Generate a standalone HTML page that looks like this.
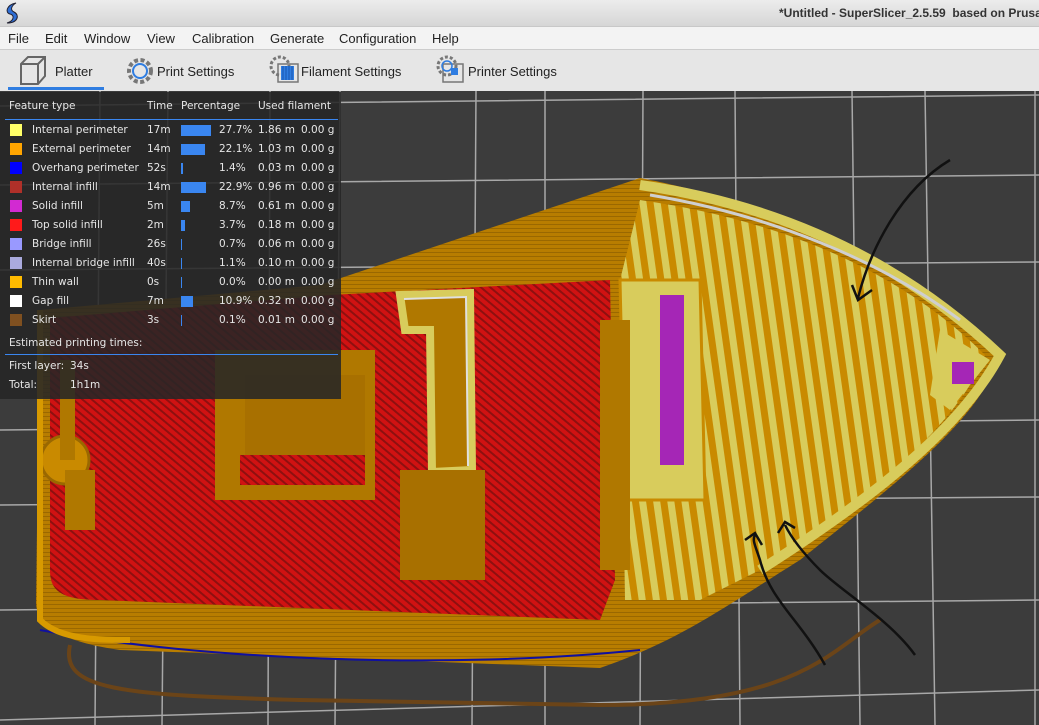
<!DOCTYPE html>
<html><head><meta charset="utf-8"><style>
*{margin:0;padding:0;box-sizing:border-box}
body{width:1039px;height:725px;overflow:hidden;font-family:"Liberation Sans","DejaVu Sans",sans-serif;background:#3b3b3b;position:relative}
#title{position:absolute;left:0;top:0;width:1039px;height:27px;background:linear-gradient(#ececec,#d6d6d6);border-bottom:1px solid #c8c8c8}
#title .t{position:absolute;left:779px;top:6px;font-size:12px;font-weight:bold;color:#333;white-space:nowrap}
#menu{position:absolute;left:0;top:27px;width:1039px;height:23px;background:#f3f3f3;font-size:13px;color:#222;border-bottom:1px solid #ccc}
#menu span{position:absolute;top:4px}
#tb{position:absolute;left:0;top:50px;width:1039px;height:41px;background:#e6e6e6;font-size:13px;color:#222}
#tb span{position:absolute;top:14px}
#tb .ul{position:absolute;left:8px;top:37px;width:96px;height:3px;background:#2f7de1}
svg.c{position:absolute;left:0;top:91px}
#leg{position:absolute;left:0;top:92px;width:341px;height:307px;background:rgba(38,38,38,0.88);color:#e6e6e6;font-family:"DejaVu Sans",sans-serif;font-size:10.5px}
#leg div{position:absolute;white-space:nowrap}
#leg .sw{width:12px;height:12px}
#leg .bar{height:11px;background:#3a86f0}
#leg .ln{height:1px;background:#3a86f0;left:5px;width:333px}
</style></head><body>
<div id="title">
<svg width="22" height="24" style="position:absolute;left:2px;top:1px" viewBox="0 0 22 24"><path d="M14 2 C4 4 3 12 8 13 C13 14 12 20 5 22 C16 22 18 14 12 11 C8 9 9 5 14 2Z" fill="#2f6fd6" stroke="#223" stroke-width="1"/></svg>
<div class="t">*Untitled - SuperSlicer_2.5.59&nbsp; based on Prusa</div></div>
<div id="menu"><span style="left:8px">File</span><span style="left:45px">Edit</span><span style="left:84px">Window</span><span style="left:147px">View</span><span style="left:192px">Calibration</span><span style="left:270px">Generate</span><span style="left:339px">Configuration</span><span style="left:432px">Help</span></div>
<div id="tb">
<svg width="36" height="34" style="position:absolute;left:18px;top:4px" viewBox="0 0 36 34"><path d="M3 10 L10 3 L27 3 L27 22 L20 30 L3 30 Z M3 10 L20 10 L20 30 M20 10 L27 3" fill="none" stroke="#666" stroke-width="2"/></svg>
<span style="left:55px">Platter</span>
<svg width="30" height="30" style="position:absolute;left:125px;top:6px" viewBox="0 0 30 30"><circle cx="15" cy="15" r="11" fill="none" stroke="#777" stroke-width="4" stroke-dasharray="4 2.5"/><circle cx="15" cy="15" r="7" fill="none" stroke="#2f7de1" stroke-width="2"/></svg>
<span style="left:157px">Print Settings</span>
<svg width="32" height="32" style="position:absolute;left:268px;top:4px" viewBox="0 0 32 32"><circle cx="12" cy="12" r="9" fill="none" stroke="#777" stroke-width="3" stroke-dasharray="3 2"/><rect x="10" y="10" width="20" height="18" fill="none" stroke="#777" stroke-width="1.5"/><rect x="13" y="12" width="13" height="14" fill="#2f7de1"/><path d="M15 12v14M18 12v14M21 12v14M24 12v14" stroke="#1a55b0"/></svg>
<span style="left:301px">Filament Settings</span>
<svg width="32" height="32" style="position:absolute;left:435px;top:4px" viewBox="0 0 32 32"><circle cx="12" cy="12" r="9" fill="none" stroke="#777" stroke-width="3" stroke-dasharray="3 2"/><rect x="8" y="10" width="20" height="18" fill="none" stroke="#777" stroke-width="1.5"/><rect x="16" y="14" width="7" height="7" fill="#2f7de1"/><circle cx="12" cy="12" r="5" fill="none" stroke="#2f7de1" stroke-width="1.5"/></svg>
<span style="left:468px">Printer Settings</span>
<div class="ul"></div></div>

<svg class="c" width="1039" height="634" viewBox="0 91 1039 634">
<defs>
<pattern id="red" width="6" height="6" patternUnits="userSpaceOnUse" patternTransform="rotate(40)"><rect width="6" height="6" fill="#d01212"/><rect width="6" height="2" fill="#8e1010"/></pattern>
<pattern id="str" width="14" height="14" patternUnits="userSpaceOnUse" patternTransform="rotate(-8)"><rect width="14" height="14" fill="#c98a00"/><rect x="3" width="7" height="14" fill="#d8cc5c"/></pattern>
<pattern id="or" width="4" height="4" patternUnits="userSpaceOnUse"><rect width="4" height="4" fill="#b87d00"/><rect width="4" height="1" fill="#9a6800"/></pattern>
</defs>
<rect x="0" y="91" width="1039" height="634" fill="#3c3c3c"/>
<g stroke="#a8a8a8" stroke-width="1.5" fill="none">
<path d="M0 106 L1039 95 M0 185 L1039 175 M0 270 L1039 262 M0 430 L1039 420 M0 505 L1039 497 M0 610 L1039 600 M0 720 L1039 690"/>
<path d="M100 91 L95 725 M168 91 L162 725 M340 91 L335 725 M476 91 L472 725 M643 91 L640 725 M735 91 L740 725 M852 91 L860 725 M925 91 L935 725 M1035 91 L1035 725 M270 91 L268 725 M545 91 L545 725"/>
</g>
<path d="M70 645 C60 690 120 695 300 700 L600 705 C800 705 830 650 880 620" fill="none" stroke="#6b4418" stroke-width="4"/>
<path d="M40 310 L320 285 L640 178 C760 200 900 260 1000 355 C980 420 900 480 800 560 C720 610 680 640 600 668 L120 650 C50 640 35 620 36 600 Z" fill="url(#or)"/>
<path d="M40 630 C200 660 450 670 640 650" fill="none" stroke="#1010a0" stroke-width="2"/>
<path d="M50 318 L330 295 L610 280 L615 580 L600 620 L100 600 C60 600 50 590 50 570 Z" fill="url(#red)"/>
<path d="M620 280 L640 200 C780 220 900 270 985 355 C960 420 880 490 760 570 L700 600 L625 600 Z" fill="url(#str)"/>
<path d="M640 185 C780 205 900 260 1000 355 C960 430 870 500 760 570" fill="none" stroke="#d8cc5c" stroke-width="10"/>
<path d="M650 195 C770 215 880 260 960 320" fill="none" stroke="#cfcfcf" stroke-width="3"/>
<path d="M620 280 L700 280 L705 500 L625 500 Z" fill="#d8cc5c" stroke="#c98a00" stroke-width="3"/>
<rect x="660" y="295" width="24" height="170" fill="#a526b6"/>
<path d="M940 330 L990 360 L950 410 L930 395Z" fill="#d8cc5c"/>
<rect x="952" y="362" width="22" height="22" fill="#a526b6"/>
<path d="M400 295 L470 293 L472 470 L432 472 L430 330 L405 330 Z" fill="#b07800" stroke="#d8cc5c" stroke-width="8"/>
<path d="M404 299 L466 297 L468 466" fill="none" stroke="#e0e0e0" stroke-width="2"/>
<rect x="215" y="350" width="160" height="150" fill="#b07800"/>
<rect x="245" y="375" width="120" height="90" fill="#a87000"/>
<rect x="240" y="455" width="125" height="30" fill="url(#red)"/>
<rect x="400" y="470" width="85" height="110" fill="#a87000"/>
<rect x="600" y="320" width="30" height="250" fill="#b07800"/>
<circle cx="65" cy="460" r="24" fill="#c98a00" stroke="#9a6800" stroke-width="3"/>
<rect x="65" y="470" width="30" height="60" fill="#b07800"/>
<rect x="60" y="360" width="15" height="100" fill="#b07800"/>
<path d="M40 310 L40 620 C60 640 100 640 130 640" fill="none" stroke="#d89a00" stroke-width="6"/>
<path d="M950 160 C900 190 870 250 858 298 M852 285 L858 300 L872 290" fill="none" stroke="#111" stroke-width="2.5"/>
<path d="M825 665 C800 620 770 600 760 560 C755 545 752 540 755 535 M745 540 L755 533 L762 545" fill="none" stroke="#111" stroke-width="2.5"/>
<path d="M915 655 C890 620 840 590 820 570 C800 550 790 535 785 525 M778 533 L785 522 L795 528" fill="none" stroke="#111" stroke-width="2.5"/>
</svg>

<div id="leg">
<div style="left:9px;top:8px">Feature type</div><div style="left:147px;top:8px">Time</div><div style="left:181px;top:8px">Percentage</div><div style="left:258px;top:8px">Used filament</div>
<div class="ln" style="top:27px"></div>
<div class="sw" style="left:10px;top:32px;background:#ffff68"></div><div style="left:32px;top:32px">Internal perimeter</div><div style="left:147px;top:32px">17m</div><div class="bar" style="left:181px;top:33px;width:30px"></div><div style="left:219px;top:32px">27.7%</div><div style="left:258px;top:32px">1.86 m</div><div style="left:301px;top:32px">0.00 g</div>
<div class="sw" style="left:10px;top:51px;background:#ffa500"></div><div style="left:32px;top:51px">External perimeter</div><div style="left:147px;top:51px">14m</div><div class="bar" style="left:181px;top:52px;width:24px"></div><div style="left:219px;top:51px">22.1%</div><div style="left:258px;top:51px">1.03 m</div><div style="left:301px;top:51px">0.00 g</div>
<div class="sw" style="left:10px;top:70px;background:#0000ff"></div><div style="left:32px;top:70px">Overhang perimeter</div><div style="left:147px;top:70px">52s</div><div class="bar" style="left:181px;top:71px;width:2px"></div><div style="left:219px;top:70px">1.4%</div><div style="left:258px;top:70px">0.03 m</div><div style="left:301px;top:70px">0.00 g</div>
<div class="sw" style="left:10px;top:89px;background:#b03029"></div><div style="left:32px;top:89px">Internal infill</div><div style="left:147px;top:89px">14m</div><div class="bar" style="left:181px;top:90px;width:25px"></div><div style="left:219px;top:89px">22.9%</div><div style="left:258px;top:89px">0.96 m</div><div style="left:301px;top:89px">0.00 g</div>
<div class="sw" style="left:10px;top:108px;background:#d22ad2"></div><div style="left:32px;top:108px">Solid infill</div><div style="left:147px;top:108px">5m</div><div class="bar" style="left:181px;top:109px;width:9px"></div><div style="left:219px;top:108px">8.7%</div><div style="left:258px;top:108px">0.61 m</div><div style="left:301px;top:108px">0.00 g</div>
<div class="sw" style="left:10px;top:127px;background:#ff1a1a"></div><div style="left:32px;top:127px">Top solid infill</div><div style="left:147px;top:127px">2m</div><div class="bar" style="left:181px;top:128px;width:4px"></div><div style="left:219px;top:127px">3.7%</div><div style="left:258px;top:127px">0.18 m</div><div style="left:301px;top:127px">0.00 g</div>
<div class="sw" style="left:10px;top:146px;background:#9999ff"></div><div style="left:32px;top:146px">Bridge infill</div><div style="left:147px;top:146px">26s</div><div class="bar" style="left:181px;top:147px;width:1px"></div><div style="left:219px;top:146px">0.7%</div><div style="left:258px;top:146px">0.06 m</div><div style="left:301px;top:146px">0.00 g</div>
<div class="sw" style="left:10px;top:165px;background:#aaaadd"></div><div style="left:32px;top:165px">Internal bridge infill</div><div style="left:147px;top:165px">40s</div><div class="bar" style="left:181px;top:166px;width:1px"></div><div style="left:219px;top:165px">1.1%</div><div style="left:258px;top:165px">0.10 m</div><div style="left:301px;top:165px">0.00 g</div>
<div class="sw" style="left:10px;top:184px;background:#ffbb00"></div><div style="left:32px;top:184px">Thin wall</div><div style="left:147px;top:184px">0s</div><div class="bar" style="left:181px;top:185px;width:1px"></div><div style="left:219px;top:184px">0.0%</div><div style="left:258px;top:184px">0.00 m</div><div style="left:301px;top:184px">0.00 g</div>
<div class="sw" style="left:10px;top:203px;background:#ffffff"></div><div style="left:32px;top:203px">Gap fill</div><div style="left:147px;top:203px">7m</div><div class="bar" style="left:181px;top:204px;width:12px"></div><div style="left:219px;top:203px">10.9%</div><div style="left:258px;top:203px">0.32 m</div><div style="left:301px;top:203px">0.00 g</div>
<div class="sw" style="left:10px;top:222px;background:#7f5020"></div><div style="left:32px;top:222px">Skirt</div><div style="left:147px;top:222px">3s</div><div class="bar" style="left:181px;top:223px;width:1px"></div><div style="left:219px;top:222px">0.1%</div><div style="left:258px;top:222px">0.01 m</div><div style="left:301px;top:222px">0.00 g</div>
<div style="left:9px;top:245px">Estimated printing times:</div>
<div class="ln" style="top:262px"></div>
<div style="left:9px;top:268px">First layer:</div><div style="left:70px;top:268px">34s</div>
<div style="left:9px;top:287px">Total:</div><div style="left:70px;top:287px">1h1m</div>
</div>
</body></html>
